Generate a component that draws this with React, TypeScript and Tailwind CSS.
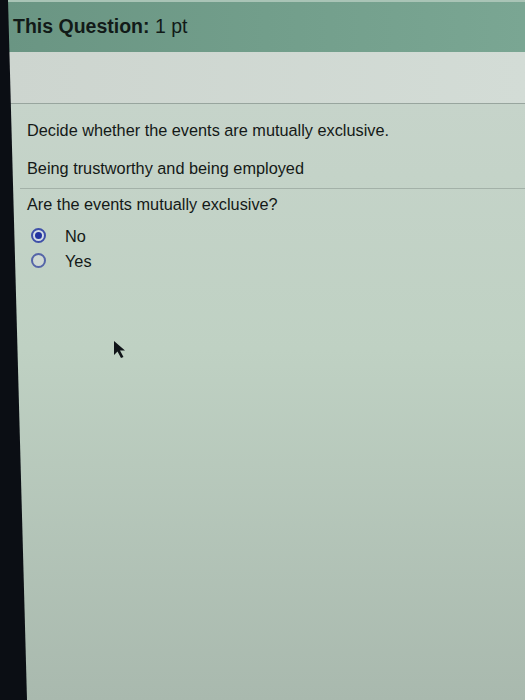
export default function App() {
  return (
    <div
      className="relative flex h-[700px] w-[525px] overflow-hidden bg-[#0b0e14]"
      style={{ fontFamily: '"Liberation Sans", Arial, sans-serif' }}
    >
      <div className="w-[7px] shrink-0 bg-[#0b0e14]" />
      <div className="relative flex flex-1 flex-col bg-linear-to-b from-[#c9d5cd] via-[#bfd1c3] to-[#a9b9ae]">
        <div className="h-[2px] bg-[#a9c4b6]" />
        <div className="flex h-[50px] items-center bg-linear-to-r from-[#6a9583] via-[#729e8b] to-[#7aa693] pl-[6px]">
          <span className="text-[19.5px] text-[#121a18]">
            <span className="font-bold">This Question:</span> 1 pt
          </span>
        </div>
        <div className="h-[52px] border-b border-[#98a59e] bg-linear-to-r from-[#cdd5cf] to-[#d3dcd6]" />
        <div className="flex flex-col pl-[20px] text-[16.3px] leading-[24px] text-[#141917]">
          <div className="pt-[14px]">Decide whether the events are mutually exclusive.</div>
          <div className="pt-[14px] pb-[8px]">Being trustworthy and being employed</div>
          <div className="-ml-[7px] border-t border-[#a3b1a8]" />
          <div className="pt-[3px]">Are the events mutually exclusive?</div>
          <div className="mt-[7px] flex flex-col pl-[4px]">
            <label className="flex h-[25px] items-center gap-[19px]">
              <span className="flex h-[15px] w-[15px] items-center justify-center rounded-full border-2 border-[#3e4fa8] bg-[#d3dce6]">
                <span className="h-[7px] w-[7px] rounded-full bg-[#2233a0]" />
              </span>
              No
            </label>
            <label className="flex h-[25px] items-center gap-[19px]">
              <span className="h-[15px] w-[15px] rounded-full border-2 border-[#5565a8] bg-[#cfd9d3]" />
              Yes
            </label>
          </div>
        </div>
        <svg className="absolute left-[106px] top-[340px]" width="16" height="20" viewBox="0 0 16 20">
          <path d="M1 1 L1 15 L4.5 11.5 L8 18 L10.5 17 L7 10.5 L12 10.5 Z" fill="#101418" />
        </svg>
      </div>
      <svg className="absolute left-0 top-0" width="30" height="700" viewBox="0 0 30 700">
        <polygon points="0,0 8,0 27,700 0,700" fill="#0b0e14" />
      </svg>
    </div>
  );
}
